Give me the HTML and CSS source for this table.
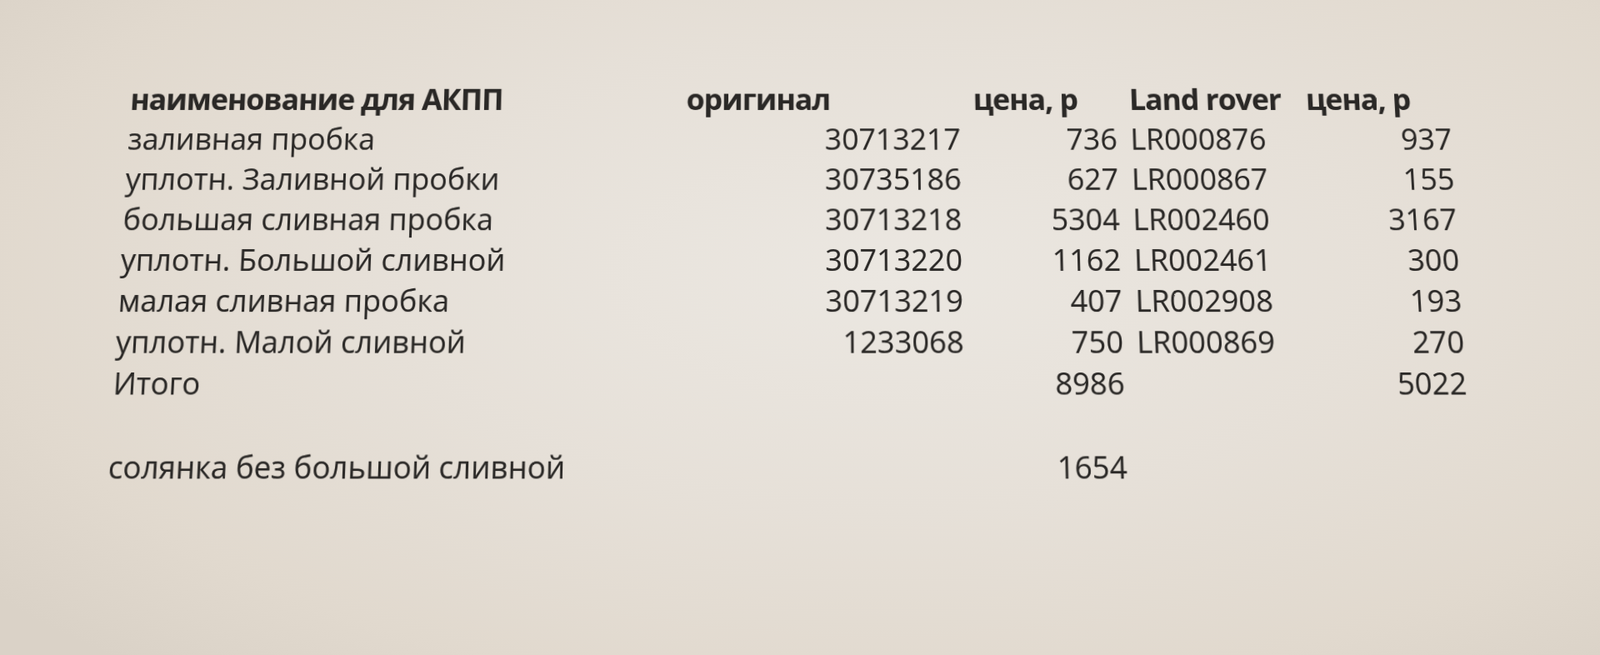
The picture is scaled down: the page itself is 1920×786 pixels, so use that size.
FILE: index.html
```html
<!DOCTYPE html>
<html lang="ru">
<head>
<meta charset="utf-8">
<title>АКПП пробки</title>
<link rel="stylesheet" href="styles.css">
</head>
<body>
<main class="paper">
  <div class="sheet">
    <div class="cell head">наименование для АКПП</div>
    <div class="cell head">оригинал</div>
    <div class="cell head">цена, р</div>
    <div class="cell head">Land rover</div>
    <div class="cell head">цена, р</div>

    <div class="cell">заливная пробка</div>
    <div class="cell num">30713217</div>
    <div class="cell num">736</div>
    <div class="cell">LR000876</div>
    <div class="cell num">937</div>

    <div class="cell">уплотн. Заливной пробки</div>
    <div class="cell num">30735186</div>
    <div class="cell num">627</div>
    <div class="cell">LR000867</div>
    <div class="cell num">155</div>

    <div class="cell">большая сливная пробка</div>
    <div class="cell num">30713218</div>
    <div class="cell num">5304</div>
    <div class="cell">LR002460</div>
    <div class="cell num">3167</div>

    <div class="cell">уплотн. Большой сливной</div>
    <div class="cell num">30713220</div>
    <div class="cell num">1162</div>
    <div class="cell">LR002461</div>
    <div class="cell num">300</div>

    <div class="cell">малая сливная пробка</div>
    <div class="cell num">30713219</div>
    <div class="cell num">407</div>
    <div class="cell">LR002908</div>
    <div class="cell num">193</div>

    <div class="cell">уплотн. Малой сливной</div>
    <div class="cell num">1233068</div>
    <div class="cell num">750</div>
    <div class="cell">LR000869</div>
    <div class="cell num">270</div>

    <div class="cell">Итого</div>
    <div class="cell"></div>
    <div class="cell num">8986</div>
    <div class="cell"></div>
    <div class="cell num">5022</div>

    <div class="cell blank"></div>

    <div class="cell">солянка без большой сливной</div>
    <div class="cell"></div>
    <div class="cell num">1654</div>
    <div class="cell"></div>
    <div class="cell"></div>
  </div>
</main>
</body>
</html>
```

FILE: styles.css
```css
html, body {
  margin: 0;
  padding: 0;
  height: 100%;
}

body {
  background:
    radial-gradient(ellipse 70% 80% at 55% 42%, #ebe7e1 0%, #e6e0d8 45%, #e1d9ce 80%, #dad2c7 100%);
  overflow: hidden;
}

.paper {
  padding: 91px 0 0 137px;
}

.sheet {
  display: grid;
  grid-template-columns: 677px 349px 190px 215px 191px;
  grid-auto-rows: 49px;
  width: max-content;
  font-family: "Open Sans", "Noto Sans", "DejaVu Sans", sans-serif;
  font-size: 36px;
  line-height: 49px;
  color: #2a2826;
  transform: perspective(1000px) rotateX(4.3deg);
  transform-origin: 805px 220px;
  text-shadow: 0 0 1px rgba(40, 38, 36, 0.35);
}

.cell {
  padding: 0 8px;
  white-space: nowrap;
}

.head {
  font-weight: 700;
  letter-spacing: -1px;
}

.num {
  text-align: right;
}

.blank {
  grid-column: 1 / -1;
}
```
